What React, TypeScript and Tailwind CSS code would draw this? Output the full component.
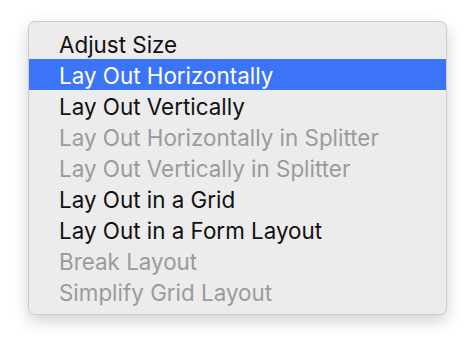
const items = [
  { label: "Adjust Size" },
  { label: "Lay Out Horizontally", active: true },
  { label: "Lay Out Vertically" },
  { label: "Lay Out Horizontally in Splitter", disabled: true },
  { label: "Lay Out Vertically in Splitter", disabled: true },
  { label: "Lay Out in a Grid" },
  { label: "Lay Out in a Form Layout" },
  { label: "Break Layout", disabled: true },
  { label: "Simplify Grid Layout", disabled: true },
];

export default function App() {
  return (
    <div className="w-[474px] h-[349px] bg-white pt-[21px] pl-[28px]">
      <div className="w-[419px] rounded-[7px] bg-[#ececec] border border-[#cbcbcb] pt-[6px] pb-[7px] shadow-[0_6px_16px_rgba(0,0,0,0.18)] overflow-hidden font-['Inter','Liberation_Sans',sans-serif]">
        {items.map((item) => (
          <div
            key={item.label}
            className={
              item.active
                ? "h-[31px] flex items-center pl-[30px] pt-[3px] bg-[#3b74f6] text-white text-[22.4px] leading-none"
                : item.disabled
                ? "h-[31px] flex items-center pl-[30px] pt-[3px] text-[#9b9b9b] text-[22.4px] leading-none"
                : "h-[31px] flex items-center pl-[30px] pt-[3px] text-[#111111] text-[22.4px] leading-none"
            }
          >
            {item.label}
          </div>
        ))}
      </div>
    </div>
  );
}
